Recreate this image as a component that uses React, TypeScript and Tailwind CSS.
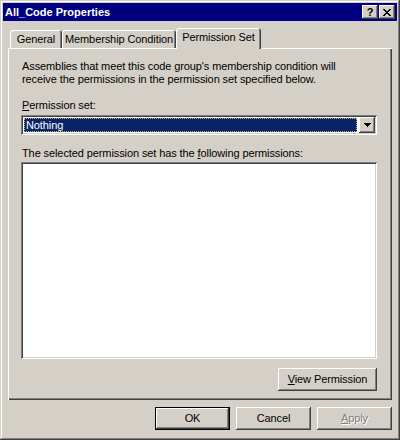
import React from "react";

const raised =
  "shadow-[inset_-1px_-1px_#404040,inset_1px_1px_#ffffff,inset_-2px_-2px_#808080,inset_2px_2px_#d4d0c8]";
const sunken =
  "shadow-[inset_1px_1px_#808080,inset_-1px_-1px_#ffffff,inset_2px_2px_#404040,inset_-2px_-2px_#d4d0c8]";

const CloseGlyph = () => {
  const rows = ["##....##", ".##..##.", "..####..", "...##...", "..####..", ".##..##.", "##....##"];
  return (
    <svg width="8" height="7" viewBox="0 0 8 7" shapeRendering="crispEdges">
      {rows.map((r, y) =>
        r.split("").map((c, x) => (c === "#" ? <rect key={`${x}-${y}`} x={x} y={y} width="1" height="1" fill="#000" /> : null))
      )}
    </svg>
  );
};

const Tab = ({ label, width, active }: { label: string; width: string; active?: boolean }) => (
  <div
    className={`${width} ${
      active ? "h-[21px] -mb-[1px] relative z-10 pb-[3px]" : "h-[18px]"
    } flex items-center justify-center bg-[#d4d0c8] rounded-t-[3px] shadow-[inset_1px_1px_#ffffff,inset_-1px_0_#404040,inset_-2px_0_#808080]`}
  >
    {label}
  </div>
);

const Button = ({ children, width, isDefault }: { children: React.ReactNode; width: string; isDefault?: boolean }) => (
  <div
    className={`${width} h-[23px] flex items-center justify-center bg-[#d4d0c8] ${
      isDefault ? "border border-black" : ""
    } ${raised}`}
  >
    {children}
  </div>
);

export default function App() {
  return (
    <div
      className="w-[400px] h-[440px] bg-[#d4d0c8] p-[3px] flex flex-col text-[11px] leading-[13px] tracking-[-0.1px] text-black shadow-[inset_-1px_-1px_#404040,inset_1px_1px_#d4d0c8,inset_-2px_-2px_#808080,inset_2px_2px_#ffffff]"
      style={{ fontFamily: '"Liberation Sans", Arial, sans-serif' }}
    >
      {/* title bar */}
      <div className="h-[18px] bg-[#000080] flex items-center pl-[2px] pr-[2px]">
        <span className="text-white font-bold text-[11px] tracking-normal flex-1">All_Code Properties</span>
        <div className={`w-[16px] h-[14px] bg-[#d4d0c8] flex items-center justify-center font-bold text-[11px] ${raised}`}>
          ?
        </div>
        <div className={`w-[16px] h-[14px] ml-[1px] bg-[#d4d0c8] flex items-center justify-center ${raised}`}>
          <CloseGlyph />
        </div>
      </div>

      {/* tabs + panel */}
      <div className="flex flex-col px-[5px] pt-[7px]">
        <div className="h-[20px] flex items-end pl-[2px]">
          <Tab label="General" width="w-[52px]" />
          <Tab label="Membership Condition" width="w-[114px]" />
          <Tab label="Permission Set" width="w-[85px]" active />
        </div>
        <div className="h-[352px] flex flex-col pl-[13px] pr-[15px] pt-[12px] shadow-[inset_1px_1px_#ffffff,inset_-1px_-1px_#404040,inset_-2px_-2px_#808080]">
          <p className="ml-[1px]">
            Assemblies that meet this code group's membership condition will
            <br />
            receive the permissions in the permission set specified below.
          </p>
          <p className="ml-[1px] mt-[13px]">
            <span className="underline">P</span>ermission set:
          </p>
          {/* combo box */}
          <div className={`mt-[3px] h-[20px] bg-white p-[2px] flex ${sunken}`}>
            <div className="flex-1 p-[1px] pr-[2px]">
              <div className="h-full bg-[#0a246a] border border-dotted border-[#c8b060] text-white pl-[1px] flex items-center">
                Nothing
              </div>
            </div>
            <div className={`w-[16px] bg-[#d4d0c8] flex items-center justify-center ${raised}`}>
              <svg width="7" height="4" viewBox="0 0 7 4" shapeRendering="crispEdges">
                <polygon points="0,0 7,0 3.5,4" fill="#000" />
              </svg>
            </div>
          </div>
          <p className="ml-[1px] mt-[12px]">
            The selected permission set has the <span className="underline">f</span>ollowing permissions:
          </p>
          {/* list box */}
          <div className={`mt-[2px] h-[197px] bg-white ${sunken}`} />
          <div className="mt-[9px] flex justify-end">
            <Button width="w-[99px]">
              <span>
                <span className="underline">V</span>iew Permission
              </span>
            </Button>
          </div>
        </div>
      </div>

      {/* dialog buttons */}
      <div className="mt-[7px] flex justify-end gap-[6px] pr-[5px]">
        <Button width="w-[75px]" isDefault>
          OK
        </Button>
        <Button width="w-[75px]">Cancel</Button>
        <Button width="w-[75px]">
          <span className="text-[#808080] [text-shadow:1px_1px_#ffffff]">
            <span className="underline">A</span>pply
          </span>
        </Button>
      </div>
    </div>
  );
}
